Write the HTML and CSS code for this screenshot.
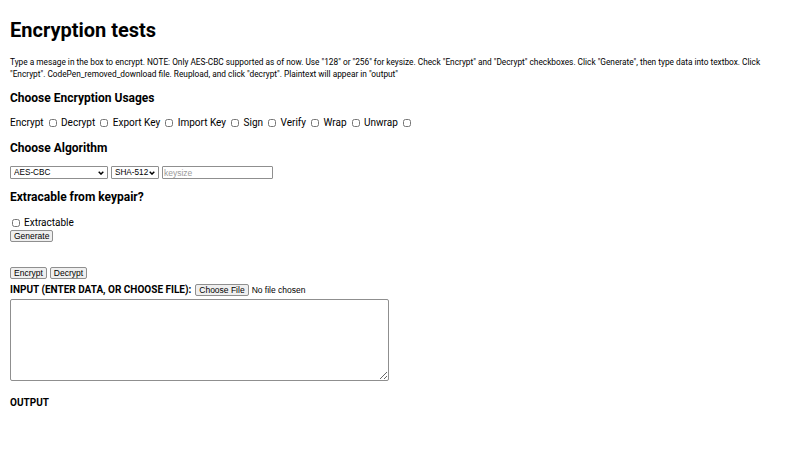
FILE: index.html
```html
<!DOCTYPE html>
<html>
<head>
<meta charset="utf-8">
<title>Encryption tests</title>
<link rel="stylesheet" href="styles.css">
</head>
<body>
<h1 class="title">Encryption tests</h1>
<p class="intro">Type a mesage in the box to encrypt. NOTE: Only AES-CBC supported as of now. Use "128" or "256" for keysize. Check "Encrypt" and "Decrypt" checkboxes. Click "Generate", then type data into textbox. Click "Encrypt". CodePen_removed_download file. Reupload, and click "decrypt". Plaintext will appear in "output"</p>
<h3 class="section">Choose Encryption Usages</h3>
<div class="usages">
  <label class="usage"><span>Encrypt</span><input type="checkbox" class="box"></label>
  <label class="usage"><span>Decrypt</span><input type="checkbox" class="box"></label>
  <label class="usage"><span>Export Key</span><input type="checkbox" class="box"></label>
  <label class="usage"><span>Import Key</span><input type="checkbox" class="box"></label>
  <label class="usage"><span>Sign</span><input type="checkbox" class="box"></label>
  <label class="usage"><span>Verify</span><input type="checkbox" class="box"></label>
  <label class="usage"><span>Wrap</span><input type="checkbox" class="box"></label>
  <label class="usage"><span>Unwrap</span><input type="checkbox" class="box"></label>
</div>
<h3 class="section">Choose Algorithm</h3>
<div class="algo">
  <span class="selwrap">
    <select class="sel sel-algo"><option>AES-CBC</option></select>
    <svg class="chev" width="6" height="4" viewBox="0 0 6 4"><path d="M0.7 0.7 L3 3.1 L5.3 0.7" fill="none" stroke="#000" stroke-width="1.4"/></svg>
  </span>
  <span class="selwrap">
    <select class="sel sel-hash"><option>SHA-512</option></select>
    <svg class="chev" width="6" height="4" viewBox="0 0 6 4"><path d="M0.7 0.7 L3 3.1 L5.3 0.7" fill="none" stroke="#000" stroke-width="1.4"/></svg>
  </span>
  <input type="text" class="keysize" placeholder="keysize">
</div>
<h3 class="section">Extracable from keypair?</h3>
<div class="extract">
  <label class="extract-label"><input type="checkbox" class="box box-ex"> Extractable</label>
  <div class="gen-row"><button class="btn">Generate</button></div>
</div>
<div class="actions">
  <button class="btn">Encrypt</button>
  <button class="btn">Decrypt</button>
</div>
<div class="input-row">
  <span class="input-label">INPUT (ENTER DATA, OR CHOOSE FILE):</span>
  <span class="file"><button class="btn file-btn">Choose File</button><span class="file-text">No file chosen</span></span>
</div>
<textarea class="data"></textarea>
<div class="output-label">OUTPUT</div>
</body>
</html>
```
FILE: styles.css
```css
html, body {
  margin: 0;
  background: #fff;
}
body {
  padding: 0 10px;
  font-family: Roboto, "Liberation Sans", sans-serif;
  color: #000;
}
.title {
  font-size: 20px;
  font-weight: 700;
  margin: 0;
  padding-top: 18px;
  line-height: 24px;
}
.intro {
  font-size: 8.3px;
  line-height: 12px;
  margin: 14px 0 0;
  max-width: 770px;
}
.section {
  font-size: 12px;
  font-weight: 700;
  margin: 11px 0 0;
  line-height: 14px;
}
.usages {
  display: flex;
  align-items: center;
  margin-top: 11px;
  font-size: 10px;
  line-height: 14px;
}
.usage {
  display: inline-flex;
  align-items: center;
  margin-right: 4.5px;
}
.box {
  width: 8px;
  height: 8px;
  margin: 0 0 0 5px;
}
.algo {
  display: flex;
  align-items: center;
  gap: 3px;
  margin-top: 11px;
  height: 13px;
}
.selwrap {
  position: relative;
  display: inline-flex;
}
.chev {
  position: absolute;
  right: 4px;
  top: 5px;
  pointer-events: none;
}
.sel {
  -webkit-appearance: none;
  appearance: none;
  font-family: "Liberation Sans", Arial, sans-serif;
  font-size: 8.2px;
  height: 13px;
  padding: 0 0 0 3px;
  border: 1px solid #8f8f8f;
  border-radius: 1px;
  background: #fff;
  color: #000;
}
.sel-algo { width: 98px; }
.sel-hash { width: 48px; }
.keysize {
  font-family: "Liberation Sans", Arial, sans-serif;
  font-size: 8.5px;
  width: 111px;
  height: 13px;
  box-sizing: border-box;
  padding: 0 1px;
  border: 1px solid #8f8f8f;
  border-radius: 1px;
}
.keysize::placeholder { color: #9a9a9a; }
.extract {
  margin-top: 12px;
  font-size: 10px;
  line-height: 13px;
}
.extract-label {
  display: inline-flex;
  align-items: center;
  height: 13px;
}
.box-ex {
  margin: 0 4px 0 2px;
}
.gen-row {
  display: flex;
  height: 12px;
}
.btn {
  font-family: "Liberation Sans", Arial, sans-serif;
  font-size: 8.5px;
  height: 12px;
  padding: 0 3px;
  border: 1px solid #8f8f8f;
  border-radius: 2px;
  background: #efefef;
  color: #000;
  line-height: 10px;
}
.actions {
  margin-top: 25px;
  display: flex;
  gap: 3px;
  height: 12px;
}
.input-row {
  display: flex;
  align-items: center;
  margin-top: 5px;
  height: 12px;
}
.input-label {
  font-size: 10px;
  font-weight: 700;
  margin-right: 4px;
}
.file {
  display: inline-flex;
  align-items: center;
  font-family: "Liberation Sans", Arial, sans-serif;
  font-size: 8.5px;
}
.file-btn { margin-right: 3px; }
.data {
  display: block;
  width: 379px;
  height: 82px;
  box-sizing: border-box;
  margin-top: 3px;
  border: 1px solid #8f8f8f;
  border-radius: 2px;
}
.output-label {
  font-size: 10px;
  font-weight: 700;
  line-height: 12px;
  margin-top: 16px;
}
```
